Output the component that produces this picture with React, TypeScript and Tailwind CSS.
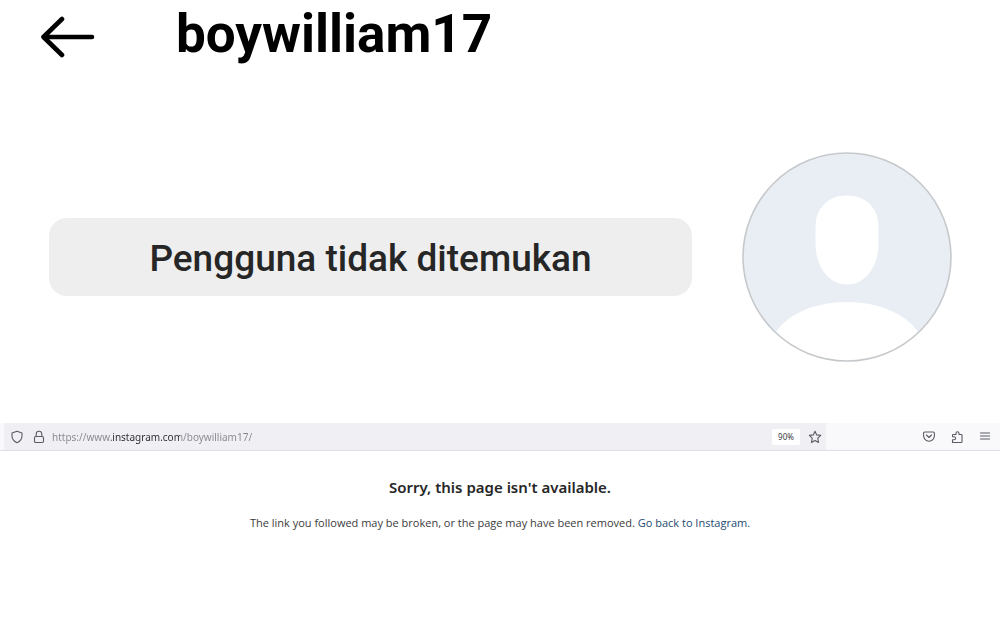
import { useState } from "react";

export default function App() {
  return (
    <div className="min-h-screen bg-white font-['Roboto',sans-serif] text-black">
      <ProfileHeader username="boywilliam17" />
      <ProfileSummary />
      <BrowserBar />
      <NotAvailable />
    </div>
  );
}

function ProfileHeader({ username }: { username: string }) {
  return (
    <header className="flex items-center gap-20 px-10 pt-1">
      <button type="button" aria-label="Back">
        <BackArrow />
      </button>
      <h1 className="pb-1 text-[53px] leading-[60px] font-bold">{username}</h1>
    </header>
  );
}

function ProfileSummary() {
  return (
    <section className="flex items-center gap-[50px] pt-21 pr-12 pb-[61px] pl-[49px]">
      <button
        type="button"
        className="h-[78px] grow rounded-[18px] bg-[#eeeeee] pt-1 text-[37px] leading-[44px] font-medium text-[#262626]"
      >
        Pengguna tidak ditemukan
      </button>
      <Avatar />
    </section>
  );
}

function BrowserBar() {
  const [url, setUrl] = useState("https://www.instagram.com/boywilliam17/");

  return (
    <div className="flex items-stretch border-b border-[#e0e0e4] bg-[#f9f9fb] pr-2 pl-1 font-['Noto_Sans',sans-serif] text-[#5b5b66]">
      <div className="mr-24 flex h-[27px] grow items-center bg-[#f0f0f4] pr-1 pl-1.5">
        <ShieldIcon />
        <div className="w-2" />
        <LockIcon />
        <input
          type="text"
          aria-label="Address"
          value={url}
          onChange={(e) => setUrl(e.target.value)}
          className="ml-1.5 min-w-0 grow bg-[linear-gradient(90deg,#85858e_59px,#2b2a33_59px,#2b2a33_128px,#85858e_128px)] bg-clip-text text-[10px] leading-4 text-transparent caret-black focus:outline-none"
        />
        <button
          type="button"
          className="h-4 w-7 rounded-xs bg-white text-[8px] leading-4 text-[#3a3a44]"
        >
          90%
        </button>
        <button type="button" aria-label="Bookmark this page" className="ml-2">
          <StarIcon />
        </button>
      </div>
      <div className="flex items-center gap-3.5">
        <button type="button" aria-label="Save to Pocket">
          <PocketIcon />
        </button>
        <button type="button" aria-label="Extensions">
          <PuzzleIcon />
        </button>
        <button type="button" aria-label="Open menu">
          <MenuIcon />
        </button>
      </div>
    </div>
  );
}

function NotAvailable() {
  return (
    <main className="px-4 pt-6 text-center font-['Noto_Sans',sans-serif]">
      <h2 className="text-[15px] leading-6 font-semibold text-[#262626]">
        Sorry, this page isn't available.
      </h2>
      <p className="mt-4 font-['Open_Sans',sans-serif] text-[11px] leading-4 text-[#3c3c3c]">
        The link you followed may be broken, or the page may have been removed.{" "}
        <a href="/" className="text-[#1d4b70]">
          Go back to Instagram.
        </a>
      </p>
    </main>
  );
}

function BackArrow() {
  return (
    <svg
      className="h-11 w-14"
      viewBox="0 0 56 44"
      fill="none"
      stroke="currentColor"
      strokeWidth="4.600"
      strokeLinecap="round"
      strokeLinejoin="round"
      aria-hidden
    >
      <path d="M52 23H3.500M22 5 3.500 23l18.500 18" />
    </svg>
  );
}

function Avatar() {
  return (
    <svg
      className="size-[210px] shrink-0"
      viewBox="0 0 210 210"
      role="img"
      aria-label="Profile picture"
    >
      <defs>
        <clipPath id="avatar-clip">
          <circle cx="105" cy="105" r="104" />
        </clipPath>
      </defs>
      <g clipPath="url(#avatar-clip)">
        <rect width="210" height="210" fill="#e8eef3" />
        <path
          d="M105 43.500c-19 0-31.500 13-31.500 31v17c0 23 13 41 31.500 41s31.500-18 31.500-41v-17c0-18-12.500-31-31.500-31Z"
          fill="#fff"
        />
        <path
          d="M34 180C47 161 74 150 105 150s58 11 71 30v30H34Z"
          fill="#fff"
        />
      </g>
      <circle
        cx="105"
        cy="105"
        r="104"
        fill="none"
        stroke="#c6c9cc"
        strokeWidth="1.600"
      />
    </svg>
  );
}

function ShieldIcon() {
  return (
    <svg
      className="size-3.5 shrink-0"
      viewBox="0 0 14 14"
      fill="none"
      stroke="currentColor"
      strokeWidth="1.1"
      strokeLinejoin="round"
      aria-hidden
    >
      <path d="M7 1.300 12 3.100v2.400C12 9 10 11.500 7 12.700 4 11.500 2 9 2 5.500V3.100Z" />
    </svg>
  );
}

function LockIcon() {
  return (
    <svg
      className="size-3.5 shrink-0"
      viewBox="0 0 14 14"
      fill="none"
      stroke="currentColor"
      strokeWidth="1.1"
      aria-hidden
    >
      <rect x="2.500" y="6.500" width="9" height="6" rx="1.200" />
      <path d="M4.200 6.500V4a2.800 2.800 0 0 1 5.600 0v2.500" />
    </svg>
  );
}

function StarIcon() {
  return (
    <svg
      className="size-3.5"
      viewBox="0 0 14 14"
      fill="none"
      stroke="currentColor"
      strokeWidth="1.1"
      strokeLinejoin="round"
      aria-hidden
    >
      <path d="m7 1.200 1.700 3.700 4 .5-2.900 2.800.7 4.200L7 10.400l-3.500 2 .7-4.200L1.300 5.400l4-.5Z" />
    </svg>
  );
}

function PocketIcon() {
  return (
    <svg
      className="size-3.5"
      viewBox="0 0 14 14"
      fill="none"
      stroke="currentColor"
      strokeWidth="1.1"
      strokeLinecap="round"
      strokeLinejoin="round"
      aria-hidden
    >
      <path d="M2.800 2h8.400c.7 0 1.200.5 1.200 1.200v2.600a5.400 5.400 0 0 1-10.800 0V3.200c0-.7.5-1.200 1.200-1.200Z" />
      <path d="M4.500 5 7 7.500 9.500 5" />
    </svg>
  );
}

function PuzzleIcon() {
  return (
    <svg
      className="size-3.5"
      viewBox="0 0 14 14"
      fill="none"
      stroke="currentColor"
      strokeWidth="1.1"
      strokeLinejoin="round"
      aria-hidden
    >
      <path d="M2.500 12.500h8.800c.4 0 .7-.3.700-.7V5.200c0-.4-.3-.7-.7-.7H9V3.200a1.500 1.500 0 0 0-3 0v1.300H3.200c-.4 0-.7.3-.7.700v1.600h1.600a1.500 1.500 0 0 1 0 3H2.500Z" />
    </svg>
  );
}

function MenuIcon() {
  return (
    <svg
      className="size-3.5"
      viewBox="0 0 14 14"
      fill="none"
      stroke="currentColor"
      strokeWidth="1.1"
      strokeLinecap="round"
      aria-hidden
    >
      <path d="M2.500 3h9M2.500 6h9M2.500 9h9" />
    </svg>
  );
}
